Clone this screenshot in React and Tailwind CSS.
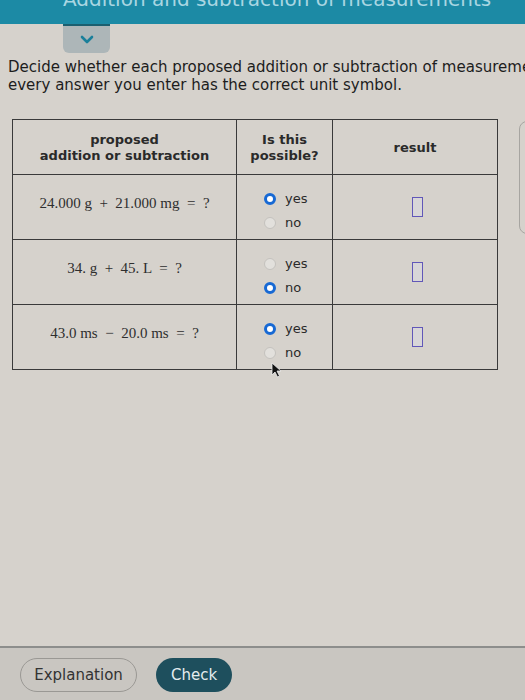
import React from 'react';

const Radio = ({ checked, label }) => (
  <div className="flex items-center gap-[9px] h-[24px]">
    {checked ? (
      <span className="w-[12px] h-[12px] rounded-full border-[3.5px] border-[#1769d4] bg-white" />
    ) : (
      <span className="w-[12px] h-[12px] rounded-full border border-[#c4c2be] bg-[#e2e0dc]" />
    )}
    <span className="text-[13px] text-[#2a2a2a]">{label}</span>
  </div>
);

const Cursor = () => (
  <svg width="12" height="16" viewBox="0 0 12 16" className="absolute left-[271px] top-[362px]">
    <path d="M1 1 L1 13 L4 10 L6.5 15 L8.5 14 L6 9 L10 9 Z" fill="#111" stroke="#eee" strokeWidth="0.8" />
  </svg>
);

const rows = [
  { eq: '24.000 g  +  21.000 mg  =  ?', yes: true },
  { eq: '34. g  +  45. L  =  ?', yes: false },
  { eq: '43.0 ms  −  20.0 ms  =  ?', yes: true },
];

export default function App() {
  return (
    <div className="relative w-[525px] h-[700px] overflow-hidden bg-[#d6d2cc] flex flex-col" style={{ fontFamily: '"DejaVu Sans", Verdana, sans-serif' }}>
      {/* title bar */}
      <div className="h-[24px] bg-[#1c8aa5] overflow-hidden shrink-0">
        <div className="-mt-[16px] ml-[63px] text-[20px] text-[#a9d6e2] whitespace-nowrap">Addition and subtraction of measurements</div>
      </div>
      <div className="ml-[63px] w-[47px] h-[29px] bg-[#adb6b8] rounded-b-[6px] border-t-[2px] border-[#1b5f70] flex items-center justify-center shrink-0">
        <svg width="14" height="9" viewBox="0 0 14 9">
          <path d="M2 2 L7 7 L12 2" fill="none" stroke="#1a7f9a" strokeWidth="2.6" strokeLinecap="round" strokeLinejoin="round" />
        </svg>
      </div>

      <div className="mt-[5px] pl-[8px] text-[15px] leading-[18px] text-[#1d1d1d] whitespace-nowrap">
        <div>Decide whether each proposed addition or subtraction of measurements is possible. If it is, make sure</div>
        <div>every answer you enter has the correct unit symbol.</div>
      </div>

      <div className="relative">
        <table className="mt-[25px] ml-[12px] w-[485px] border-collapse border border-[#3a3a3a] table-fixed">
          <colgroup>
            <col className="w-[224px]" />
            <col className="w-[96px]" />
            <col className="w-[165px]" />
          </colgroup>
          <thead>
            <tr className="h-[55px] text-[13px] font-bold text-[#2a2a2a] leading-[16px]">
              <th className="border border-[#3a3a3a] text-center pt-[2px]">proposed<br />addition or subtraction</th>
              <th className="border border-[#3a3a3a] text-center pt-[2px]">Is this<br />possible?</th>
              <th className="border border-[#3a3a3a] text-center align-middle pt-[2px]">result</th>
            </tr>
          </thead>
          <tbody>
            {rows.map((r, i) => (
              <tr key={i} className="h-[65px]">
                <td className="border border-[#3a3a3a] text-center text-[15px] text-[#2e2e2e] pb-[8px]" style={{ fontFamily: '"Liberation Serif", "Times New Roman", serif' }}>
                  <span className="whitespace-pre">{r.eq}</span>
                </td>
                <td className="border border-[#3a3a3a] pt-[7px]">
                  <div className="pl-[27px] flex flex-col">
                    <Radio checked={r.yes} label="yes" />
                    <Radio checked={!r.yes} label="no" />
                  </div>
                </td>
                <td className="border border-[#3a3a3a]">
                  <div className="flex justify-center pl-[5px]">
                    <span className="w-[11px] h-[20px] border-[1.5px] border-[#6157b8] bg-[#d8d6d8]" />
                  </div>
                </td>
              </tr>
            ))}
          </tbody>
        </table>
        <div className="absolute left-[519px] top-[27px] w-[40px] h-[113px] rounded-[8px] border border-[#a7a5a1]" />
      </div>

      <div className="flex-1" />
      <div className="h-[2px] bg-[#8d8e8c] shrink-0" />
      <div className="h-[52px] bg-[#c9c6c1] flex items-start pt-[10px] pl-[20px] gap-[19px] shrink-0">
        <button className="h-[34px] w-[117px] rounded-full border border-[#9a9894] text-[15px] text-[#333]">Explanation</button>
        <button className="h-[34px] w-[76px] rounded-full bg-[#1e4f5d] text-[15px] text-[#e4ecee]">Check</button>
      </div>
      <Cursor />
    </div>
  );
}
